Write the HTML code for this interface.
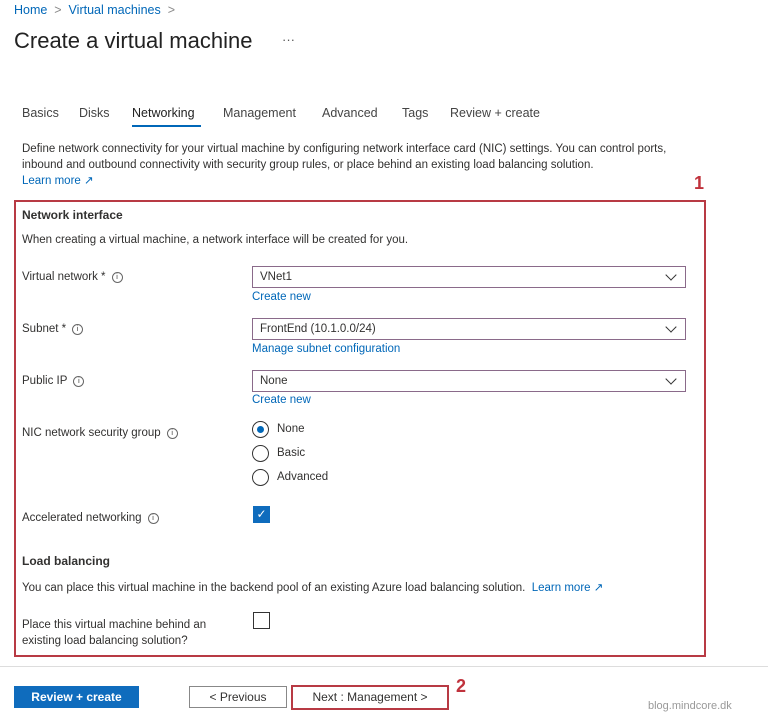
<html><head><style>
body{margin:0;width:768px;height:718px;background:#fff;font-family:"Liberation Sans",sans-serif;color:#323130;position:relative;overflow:hidden}
.a{position:absolute;white-space:nowrap}
.s{font-size:11.5px}
.l{color:#0067b8}
.dd{position:absolute;left:252px;width:434px;height:22px;border:1px solid #8a6a8a;font-size:11.5px;line-height:20px;padding-left:7px;box-sizing:border-box}
.dd:after{content:"";position:absolute;right:10px;top:4px;width:7px;height:7px;border-right:1.5px solid #333;border-bottom:1.5px solid #333;transform:rotate(45deg)}
.i{display:inline-block;width:9px;height:9px;border:1px solid #666;border-radius:50%;font-size:7px;line-height:9px;text-align:center;margin-left:6px;vertical-align:1px}
.r{position:absolute;left:252px;width:15px;height:15px;border:1px solid #333;border-radius:50%}
</style></head><body>
<div class="a s l" style="left:14px;top:3px;font-size:12.5px">Home &nbsp;<span style="color:#888">&gt;</span>&nbsp; Virtual machines &nbsp;<span style="color:#888">&gt;</span></div>
<div class="a" style="left:14px;top:28px;font-size:22px;color:#222">Create a virtual machine</div>
<div class="a" style="left:282px;top:32px;font-size:13px;color:#555">···</div>
<div class="a" style="left:22px;top:106px;font-size:12.5px;color:#444">Basics</div>
<div class="a" style="left:79px;top:106px;font-size:12.5px;color:#444">Disks</div>
<div class="a" style="left:132px;top:106px;font-size:12.5px;color:#222">Networking</div>
<div class="a" style="left:132px;top:125px;width:69px;height:2px;background:#0067b8"></div>
<div class="a" style="left:223px;top:106px;font-size:12.5px;color:#444">Management</div>
<div class="a" style="left:322px;top:106px;font-size:12.5px;color:#444">Advanced</div>
<div class="a" style="left:402px;top:106px;font-size:12.5px;color:#444">Tags</div>
<div class="a" style="left:450px;top:106px;font-size:12.5px;color:#444">Review + create</div>
<div class="a s" style="left:22px;top:141px;line-height:16px;white-space:normal;width:672px">Define network connectivity for your virtual machine by configuring network interface card (NIC) settings. You can control ports, inbound and outbound connectivity with security group rules, or place behind an existing load balancing solution.<br><span class="l">Learn more ↗</span></div>
<div class="a" style="left:694px;top:173px;font-size:18px;font-weight:bold;color:#c0323c">1</div>
<div class="a" style="left:14px;top:200px;width:688px;height:453px;border:2px solid #b83a44"></div>
<div class="a s" style="left:22px;top:208px;font-weight:bold;font-size:12px">Network interface</div>
<div class="a s" style="left:22px;top:234px">When creating a virtual machine, a network interface will be created for you.</div>
<div class="a s" style="left:22px;top:271px">Virtual network *<span class="i">i</span></div>
<div class="dd" style="top:266px">VNet1</div>
<div class="a s l" style="left:252px;top:291px">Create new</div>
<div class="a s" style="left:22px;top:323px">Subnet *<span class="i">i</span></div>
<div class="dd" style="top:318px">FrontEnd (10.1.0.0/24)</div>
<div class="a s l" style="left:252px;top:343px">Manage subnet configuration</div>
<div class="a s" style="left:22px;top:375px">Public IP<span class="i">i</span></div>
<div class="dd" style="top:370px">None</div>
<div class="a s l" style="left:252px;top:394px">Create new</div>
<div class="a s" style="left:22px;top:427px">NIC network security group<span class="i">i</span></div>
<div class="r" style="top:421px"><div style="position:absolute;left:4px;top:4px;width:7px;height:7px;border-radius:50%;background:#0067b8"></div></div>
<div class="a s" style="left:277px;top:423px">None</div>
<div class="r" style="top:445px"></div><div class="a s" style="left:277px;top:447px">Basic</div>
<div class="r" style="top:469px"></div><div class="a s" style="left:277px;top:471px">Advanced</div>
<div class="a s" style="left:22px;top:512px">Accelerated networking<span class="i">i</span></div>
<div class="a" style="left:253px;top:506px;width:17px;height:17px;background:#0f6cbd;color:#fff;font-size:12px;text-align:center;line-height:17px">✓</div>
<div class="a s" style="left:22px;top:554px;font-weight:bold;font-size:12px">Load balancing</div>
<div class="a s" style="left:22px;top:580px">You can place this virtual machine in the backend pool of an existing Azure load balancing solution. &nbsp;<span class="l">Learn more ↗</span></div>
<div class="a s" style="left:22px;top:617px;line-height:16px">Place this virtual machine behind an<br>existing load balancing solution?</div>
<div class="a" style="left:253px;top:612px;width:15px;height:15px;border:1px solid #333"></div>
<div class="a" style="left:0;top:666px;width:768px;height:1px;background:#ddd"></div>
<div class="a" style="left:14px;top:686px;width:125px;height:22px;background:#0f6cbd;color:#fff;font-size:12px;font-weight:bold;text-align:center;line-height:22px">Review + create</div>
<div class="a" style="left:189px;top:686px;width:96px;height:20px;border:1px solid #888;font-size:12px;text-align:center;line-height:20px">&lt; Previous</div>
<div class="a" style="left:291px;top:685px;width:154px;height:21px;border:2px solid #b83a44;font-size:12px;text-align:center;line-height:21px">Next : Management &gt;</div>
<div class="a" style="left:456px;top:676px;font-size:18px;font-weight:bold;color:#c0323c">2</div>
<div class="a" style="left:648px;top:700px;font-size:11px;color:#999">blog.mindcore.dk</div>
</body></html>
